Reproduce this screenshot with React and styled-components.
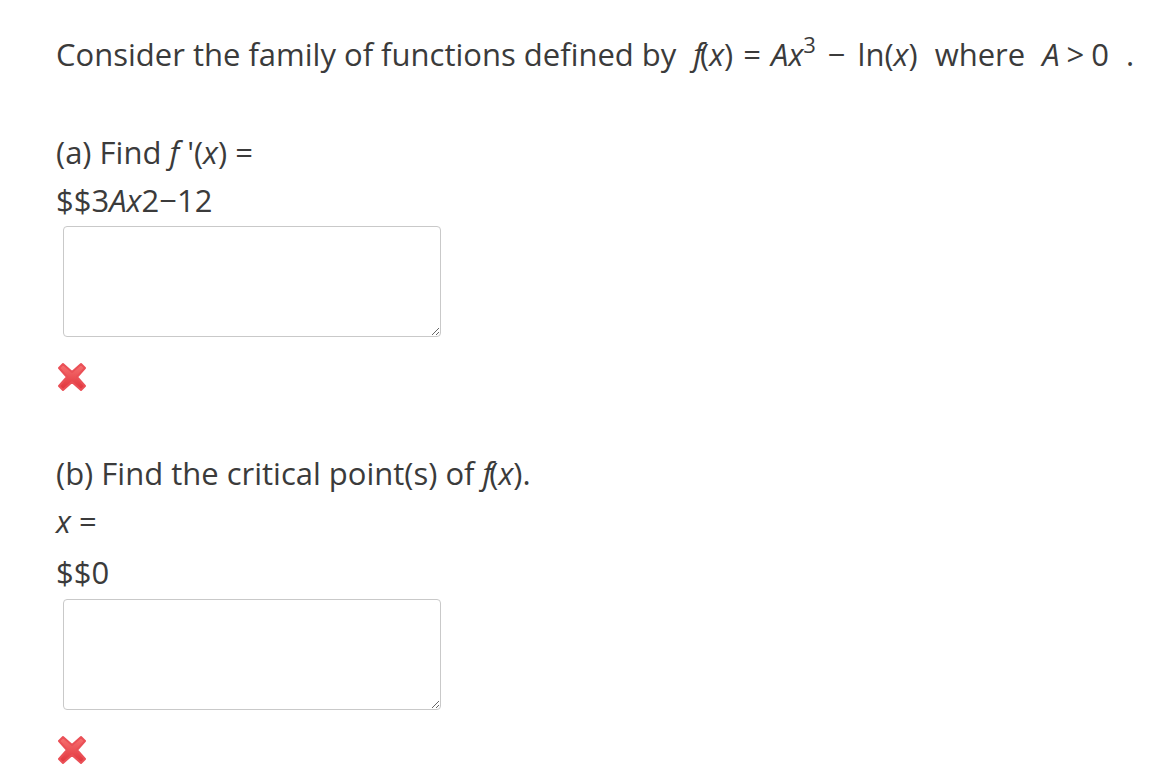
import React from "react";
import styled, { createGlobalStyle } from "styled-components";

const Global = createGlobalStyle`
  html, body { margin: 0; padding: 0; background: #fff; }
  body { font-family: "Open Sans", "Noto Sans", sans-serif; color: #3b3b3b; }
`;

const Page = styled.div`
  padding: 30px 0 0 56px;
  font-size: 31px;
`;

const Line = styled.div`
  line-height: 48px;
  height: 48px;
  white-space: nowrap;
  margin-top: ${(p) => p.$mt || 0}px;
`;

const MathSpan = styled.span`
  margin: 0 ${(p) => p.$gap || 12}px;
`;

const Op = styled.span`
  margin: 0 ${(p) => p.$m || 10}px;
`;

const V = styled.i`
  font-style: italic;
  letter-spacing: ${(p) => p.$ls || 0}px;
`;

const Sup = styled.sup`
  font-size: 22px;
  vertical-align: 13px;
  line-height: 0;
`;

const Answer = styled.textarea`
  display: block;
  box-sizing: border-box;
  width: 378px;
  height: 111px;
  margin: ${(p) => p.$mt || 0}px 0 0 7px;
  border: 1px solid #c9c9c9;
  border-radius: 4px;
  background: #fff;
  resize: vertical;
  font-family: inherit;
`;

const Mark = styled.div`
  width: 34px;
  height: 34px;
  margin: ${(p) => p.$mt || 0}px 0 0 -1px;
`;

function Cross(props) {
  return (
    <Mark {...props}>
      <svg width="34" height="34" viewBox="0 0 34 34">
        <defs>
          <linearGradient id="cg" x1="0" y1="0" x2="0" y2="1">
            <stop offset="0" stopColor="#f77272" />
            <stop offset="1" stopColor="#e0333b" />
          </linearGradient>
        </defs>
        <path
          d="M4 8 L8 4 L17 12 L26 4 L30 8 L22 17 L30 26 L26 30 L17 22 L8 30 L4 26 L12 17 Z"
          fill="url(#cg)"
          stroke="#ea5057"
          strokeWidth="2"
          strokeLinejoin="round"
        />
      </svg>
    </Mark>
  );
}

export default function App() {
  return (
    <Page>
      <Global />
      <Line>
        Consider the family of functions defined by
        <MathSpan $gap={17}>
          <V $ls={-3}>f</V>(<V>x</V>)<Op>=</Op><V>A</V><V>x</V><Sup>3</Sup><Op $m={12}>−</Op>ln(<V>x</V>)
        </MathSpan>
        where
        <MathSpan $gap={17}>
          <V>A</V><Op $m={7}>&gt;</Op>0
        </MathSpan>
        .
      </Line>
      <Line $mt={50}>
        (a) Find <V>f</V> '(<V>x</V>) =
      </Line>
      <Line>
        $$3<V>A</V><V>x</V>2−12
      </Line>
      <Answer $mt={2} />
      <Cross $mt={23} />
      <Line $mt={55}>
        (b) Find the critical point(s) of <V $ls={-3}>f</V>(<V>x</V>).
      </Line>
      <Line>
        <V>x</V> =
      </Line>
      <Line $mt={3}>$$0</Line>
      <Answer $mt={3} />
      <Cross $mt={23} />
    </Page>
  );
}
